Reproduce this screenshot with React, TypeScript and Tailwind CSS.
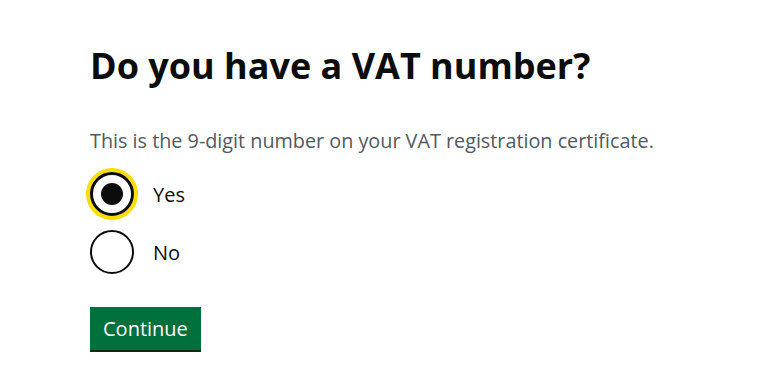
export default function App() {
  return (
    <div className="min-h-screen bg-white font-['Open_Sans',Arial,sans-serif] text-[#0b0c0c]">
      <div className="px-[90px] pt-[46px]">
        <h1 className="text-[36px] font-bold leading-[40px]">Do you have a VAT number?</h1>
        <p className="mt-[42px] text-[19.8px] leading-[25px] text-[#505a5f]">
          This is the 9-digit number on your VAT registration certificate.
        </p>
        <div className="mt-[19px] flex flex-col gap-[14px]">
          <label className="flex items-center gap-[19px]">
            <span className="flex size-[44px] items-center justify-center rounded-full border-[3px] border-[#0b0c0c] ring-[4px] ring-[#ffdd00]">
              <span className="size-[22px] rounded-full bg-[#0b0c0c]" />
            </span>
            <span className="text-[20px] leading-[25px]">Yes</span>
          </label>
          <label className="flex items-center gap-[19px]">
            <span className="size-[44px] rounded-full border-2 border-[#0b0c0c]" />
            <span className="text-[20px] leading-[25px]">No</span>
          </label>
        </div>
        <button
          type="button"
          className="mt-[33px] h-[43px] bg-[#00703c] px-[13px] text-[20px] leading-[25px] text-white shadow-[0_2px_0_#002d18]"
        >
          Continue
        </button>
      </div>
    </div>
  )
}
